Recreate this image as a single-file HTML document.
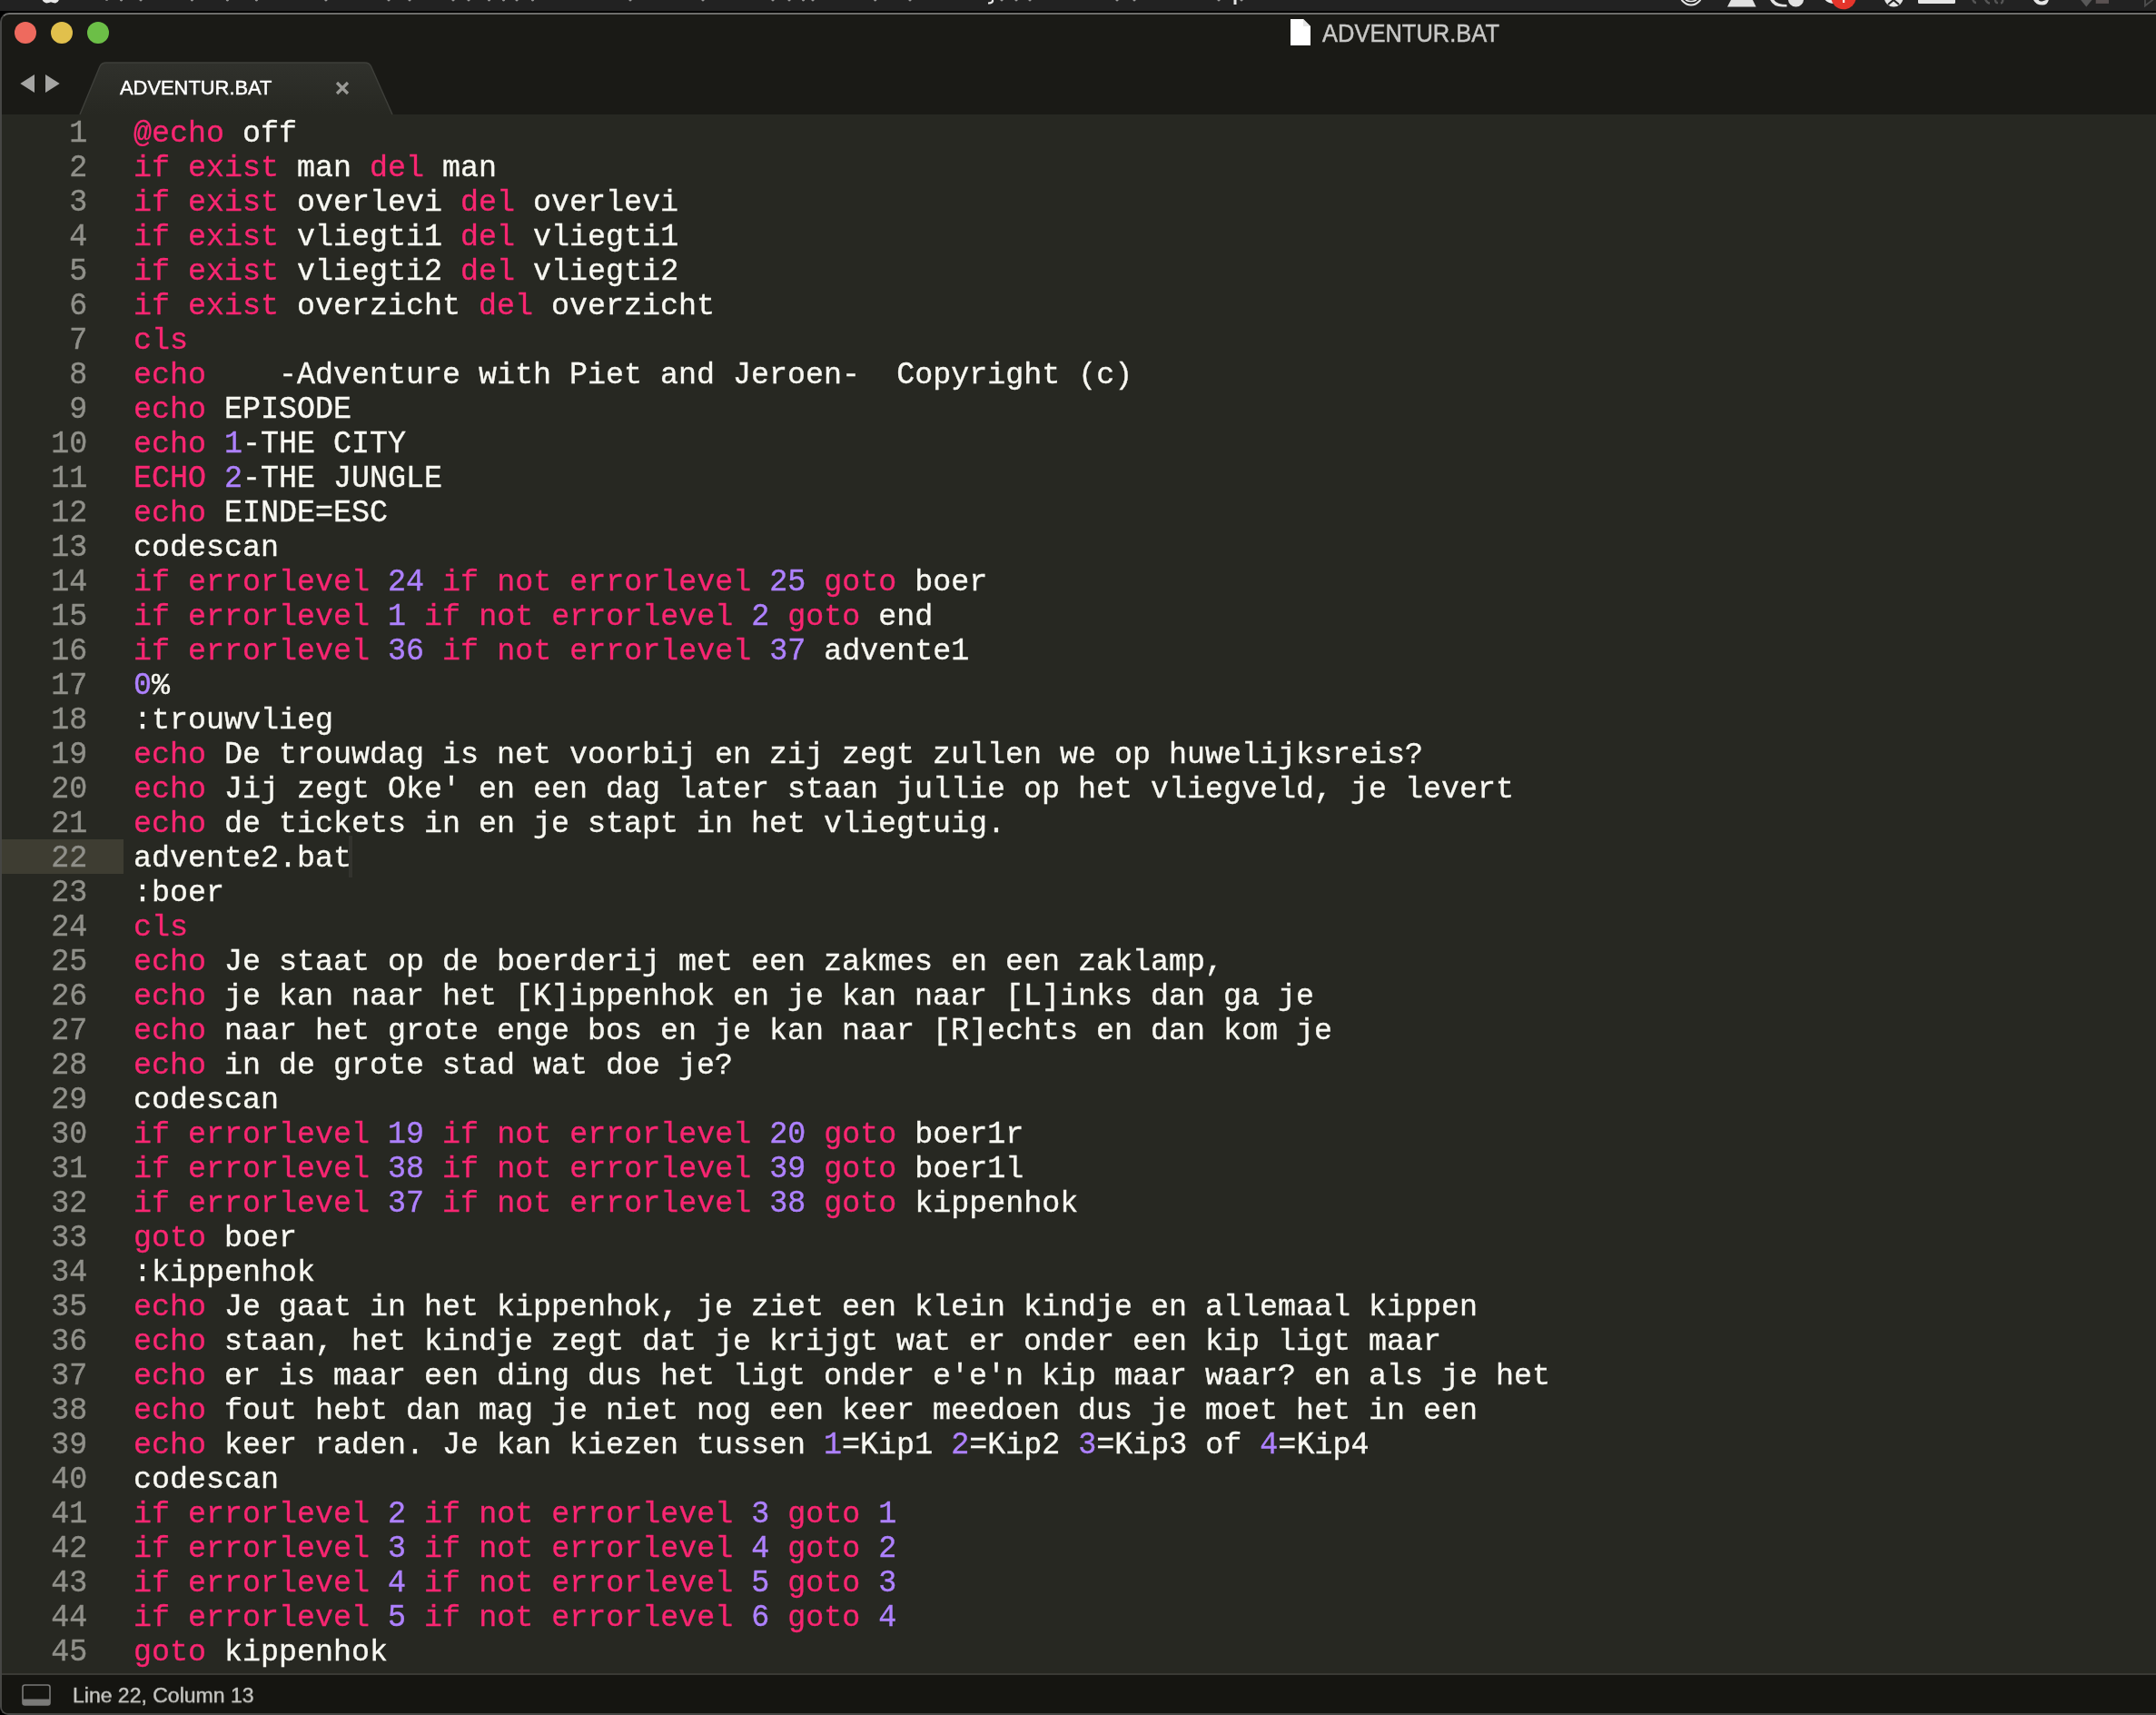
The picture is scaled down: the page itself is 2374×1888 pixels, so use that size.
<!DOCTYPE html>
<html><head><meta charset="utf-8">
<style>
*{margin:0;padding:0;box-sizing:border-box}
html,body{width:2374px;height:1888px;overflow:hidden;background:#000}
body{position:relative;font-family:"Liberation Sans",sans-serif}
#menubar{position:absolute;left:0;top:0;width:2374px;height:12px;background:#222222;overflow:hidden}
#win{position:absolute;left:0;top:14px;width:2400px;height:1874px;background:#1a1a16;border-radius:10px 0 0 9px;border:2px solid #464644;border-top-color:#6e6e6c;border-right:none;overflow:hidden}
#editor{position:absolute;left:0;top:110px;width:2400px;height:1716px;background:#272822}
#status{position:absolute;left:0;top:1826px;width:2400px;height:44px;background:#151511;border-top:2px solid #3a3a35}
.r{will-change:transform;position:absolute;left:0;height:38px;width:2374px;font-family:"Liberation Mono",monospace;font-size:33.33px;line-height:38px;white-space:pre;color:#f8f8f2}
.r .n{position:absolute;right:calc(2374px - 96.3px);top:2.2px;color:#90908a;text-align:right;transform:scaleY(1.08);transform-origin:0 28px}
.r .c{position:absolute;left:147px;top:1.6px;transform:scaleY(1.02);transform-origin:0 28px}
.r b{font-weight:normal;color:#f92672}
.r .c,.r .n{-webkit-text-stroke:0.35px currentColor}
.r i{font-style:normal;color:#ae81ff}
.r u{text-decoration:none;display:inline-block;transform:scaleY(1.04);transform-origin:0 27.9px}
.dot{position:absolute;width:24px;height:24px;border-radius:50%}
.ui{position:absolute;white-space:pre;line-height:1;will-change:transform;-webkit-text-stroke:0.45px currentColor}
</style></head><body>
<div id="menubar"><svg width="2374" height="12" style="position:absolute;left:0;top:0">
  <ellipse cx="117.5" cy="0" rx="1.5" ry="1.0" fill="#8a8a8a"/><ellipse cx="133.5" cy="0" rx="1.6" ry="1.4" fill="#9a9a9a"/><ellipse cx="155.0" cy="0" rx="1.6" ry="1.4" fill="#9a9a9a"/><ellipse cx="211.4" cy="0" rx="1.6" ry="1.4" fill="#9a9a9a"/><ellipse cx="250.4" cy="0" rx="1.6" ry="1.4" fill="#9a9a9a"/><ellipse cx="282.4" cy="0" rx="1.6" ry="1.4" fill="#9a9a9a"/><ellipse cx="358.9" cy="0" rx="1.6" ry="1.4" fill="#9a9a9a"/><ellipse cx="428.0" cy="0" rx="1.6" ry="1.4" fill="#9a9a9a"/><ellipse cx="451.0" cy="0" rx="1.6" ry="1.4" fill="#9a9a9a"/><ellipse cx="499.0" cy="0" rx="1.6" ry="1.4" fill="#9a9a9a"/><ellipse cx="516.0" cy="0" rx="1.6" ry="1.4" fill="#9a9a9a"/><ellipse cx="538.5" cy="0" rx="1.6" ry="1.4" fill="#9a9a9a"/><ellipse cx="554.5" cy="0" rx="1.6" ry="1.4" fill="#9a9a9a"/><ellipse cx="569.0" cy="0" rx="1.6" ry="1.4" fill="#9a9a9a"/><ellipse cx="586.5" cy="0" rx="1.6" ry="1.4" fill="#9a9a9a"/><ellipse cx="694.0" cy="0" rx="1.6" ry="1.4" fill="#9a9a9a"/><ellipse cx="774.0" cy="0" rx="1.6" ry="1.4" fill="#9a9a9a"/><ellipse cx="851.0" cy="0" rx="1.6" ry="1.4" fill="#9a9a9a"/><ellipse cx="869.0" cy="0" rx="1.6" ry="1.4" fill="#9a9a9a"/><ellipse cx="884.5" cy="0" rx="1.6" ry="1.4" fill="#9a9a9a"/><ellipse cx="895.0" cy="0" rx="1.6" ry="1.4" fill="#9a9a9a"/><ellipse cx="963.7" cy="0" rx="1.6" ry="1.4" fill="#9a9a9a"/><ellipse cx="1002.0" cy="0" rx="1.6" ry="1.4" fill="#9a9a9a"/><ellipse cx="1103.0" cy="0" rx="1.6" ry="1.4" fill="#9a9a9a"/><ellipse cx="1119.0" cy="0" rx="1.6" ry="1.4" fill="#9a9a9a"/><ellipse cx="1134.0" cy="0" rx="1.6" ry="1.4" fill="#9a9a9a"/><ellipse cx="1230.0" cy="0" rx="1.6" ry="1.4" fill="#9a9a9a"/><ellipse cx="1249.0" cy="0" rx="1.6" ry="1.4" fill="#9a9a9a"/><ellipse cx="1342.0" cy="0" rx="1.6" ry="1.4" fill="#9a9a9a"/><ellipse cx="1367.0" cy="0" rx="1.6" ry="1.4" fill="#9a9a9a"/><path d="M1093,-2 L1093,1.5 Q1092,3.5 1088,3.5" fill="none" stroke="#e6e6e6" stroke-width="2.2"/><rect x="1358.5" y="-1" width="3" height="6" fill="#e6e6e6"/>
  <path d="M46,-2 Q47,3 51,3.5 Q54,3 56,2.2 Q58,3 61,3.5 Q64.5,3 65.5,-2 Z" fill="#e8e8e8"/>
  <path d="M1850,-6 A12.5,12 0 0 0 1874.5,-6 A12.5,11.5 0 0 1 1850,-6 Z" fill="none"/>
  <path d="M1849.5,-8 A12.5,13.5 0 0 0 1874.5,-8" fill="none" stroke="#e6e6e6" stroke-width="2"/>
  <path d="M1856,0 Q1862,3 1868,0" fill="none" stroke="#e6e6e6" stroke-width="1.6"/>
  <polygon points="1907,-2 1929,-2 1933.6,7.6 1902,7.6" fill="#e2e2e2"/>
  <path d="M1948,-4 Q1950,7.5 1963,7.6 L1967.5,7.6 L1967.5,5 Q1953,5 1952,-4 Z" fill="#e2e2e2"/>
  <circle cx="1977.5" cy="-1" r="8.6" fill="#e2e2e2"/>
  <path d="M2008,-2 Q2012,4 2020,4 L2020,-2 Z" fill="#ececec"/>
  <circle cx="2030" cy="-3.5" r="13.8" fill="#e5352b"/>
  <rect x="2029" y="-2" width="2.2" height="5" fill="#fff"/>
  <circle cx="2085.2" cy="-3" r="10.5" fill="#e6e6e6"/>
  <path d="M2079,-5 L2091,5 M2091,-5 L2079,5" fill="none" stroke="#222" stroke-width="2.2"/>
  <rect x="2112" y="-4" width="41" height="7.9" rx="1.5" fill="#e6e6e6"/>
  <path d="M2172,-2 Q2173,3 2176,3 M2186,-1 Q2188,3.5 2191,3.5 M2197,-1 Q2197,3.5 2200,3 M2205,-2 Q2206,3 2203,3.5" fill="none" stroke="#555" stroke-width="2.5"/>
  <path d="M2238,-3 Q2240,5.5 2249,5.5 Q2255,5.5 2256,-1 L2250,1 Q2245,3 2243,-3 Z" fill="#e6e6e6"/>
  <polygon points="2289.6,-2 2305,-2 2297.3,7.6" fill="#585858"/>
  <rect x="2307.7" y="-2" width="14.3" height="5.9" fill="#5a5252"/>
  <path d="M2362,-2 L2362,6.3 L2374,-3" fill="none" stroke="#4e4e4e" stroke-width="1.8"/>
</svg></div>
<div id="win">
  <div class="dot" style="left:14px;top:8px;background:#ee6a5e"></div>
  <div class="dot" style="left:54px;top:8px;background:#e1c04c"></div>
  <div class="dot" style="left:94px;top:8px;background:#6cbf47"></div>
  <div id="editor"></div>
  <div id="status"></div>
</div>
<!-- nav arrows -->
<svg style="position:absolute;left:0;top:0" width="100" height="130">
  <polygon points="22.3,92 38,82 38,102" fill="#a5a5a3"/>
  <polygon points="50,82 65.7,92 50,102" fill="#a5a5a3"/>
</svg>
<!-- tab -->
<svg style="position:absolute;left:0;top:0" width="500" height="130">
  <defs><linearGradient id="tg" x1="0" y1="0" x2="0" y2="1"><stop offset="0" stop-color="#30312c"/><stop offset="1" stop-color="#272822"/></linearGradient></defs>
  <path d="M88,126 L110,73 Q112,69 117,69 L401.5,69 Q406.5,69 408.5,73 L432,126 Z" fill="url(#tg)"/>
  <path d="M88,126 L110,73 Q112,69 117,69 L401.5,69 Q406.5,69 408.5,73 L432,126" fill="none" stroke="#3e3f3a" stroke-width="1.5"/>
  <path d="M371,91 L383,103 M383,91 L371,103" stroke="#9a9a96" stroke-width="3.2" stroke-linecap="butt"/>
</svg>
<div class="ui" id="tabt" style="left:132px;top:85.6px;font-size:21.9px;color:#ffffff;transform:scaleY(1.03);transform-origin:0 100%">ADVENTUR.BAT</div>
<!-- title -->
<svg style="position:absolute;left:1418px;top:18px" width="30" height="34">
  <path d="M3,3 L17,3 L25,11 L25,32 L3,32 Z" fill="#ffffff"/>
  <path d="M17,3 L17,11 L25,11" fill="#e6e6e6"/>
</svg>
<div class="ui" id="titt" style="left:1456px;top:25.3px;font-size:25.5px;color:#c8c8c6;transform:scaleY(1.075);transform-origin:0 100%">ADVENTUR.BAT</div>
<!-- gutter highlight + cursor -->
<div style="position:absolute;left:2px;top:924px;width:134px;height:38px;background:#3e3d32"></div>
<div style="position:absolute;left:384px;top:920px;width:4px;height:46px;background:#33332e"></div>
<div class="r" style="top:126px"><span class="n">1</span><span class="c"><b>@echo</b> off</span></div>
<div class="r" style="top:164px"><span class="n">2</span><span class="c"><b>if</b> <b>exist</b> man <b>del</b> man</span></div>
<div class="r" style="top:202px"><span class="n">3</span><span class="c"><b>if</b> <b>exist</b> overlevi <b>del</b> overlevi</span></div>
<div class="r" style="top:240px"><span class="n">4</span><span class="c"><b>if</b> <b>exist</b> vliegti<u>1</u> <b>del</b> vliegti<u>1</u></span></div>
<div class="r" style="top:278px"><span class="n">5</span><span class="c"><b>if</b> <b>exist</b> vliegti<u>2</u> <b>del</b> vliegti<u>2</u></span></div>
<div class="r" style="top:316px"><span class="n">6</span><span class="c"><b>if</b> <b>exist</b> overzicht <b>del</b> overzicht</span></div>
<div class="r" style="top:354px"><span class="n">7</span><span class="c"><b>cls</b></span></div>
<div class="r" style="top:392px"><span class="n">8</span><span class="c"><b>echo</b>    -<u>A</u>dventure with <u>P</u>iet and <u>J</u>eroen-  <u>C</u>opyright (c)</span></div>
<div class="r" style="top:430px"><span class="n">9</span><span class="c"><b>echo</b> <u>EPISODE</u></span></div>
<div class="r" style="top:468px"><span class="n">10</span><span class="c"><b>echo</b> <i><u>1</u></i>-<u>THE</u> <u>CITY</u></span></div>
<div class="r" style="top:506px"><span class="n">11</span><span class="c"><b><u>ECHO</u></b> <i><u>2</u></i>-<u>THE</u> <u>JUNGLE</u></span></div>
<div class="r" style="top:544px"><span class="n">12</span><span class="c"><b>echo</b> <u>EINDE</u>=<u>ESC</u></span></div>
<div class="r" style="top:582px"><span class="n">13</span><span class="c">codescan</span></div>
<div class="r" style="top:620px"><span class="n">14</span><span class="c"><b>if</b> <b>errorlevel</b> <i><u>24</u></i> <b>if</b> <b>not</b> <b>errorlevel</b> <i><u>25</u></i> <b>goto</b> boer</span></div>
<div class="r" style="top:658px"><span class="n">15</span><span class="c"><b>if</b> <b>errorlevel</b> <i><u>1</u></i> <b>if</b> <b>not</b> <b>errorlevel</b> <i><u>2</u></i> <b>goto</b> end</span></div>
<div class="r" style="top:696px"><span class="n">16</span><span class="c"><b>if</b> <b>errorlevel</b> <i><u>36</u></i> <b>if</b> <b>not</b> <b>errorlevel</b> <i><u>37</u></i> advente<u>1</u></span></div>
<div class="r" style="top:734px"><span class="n">17</span><span class="c"><i><u>0</u></i>%</span></div>
<div class="r" style="top:772px"><span class="n">18</span><span class="c">:trouwvlieg</span></div>
<div class="r" style="top:810px"><span class="n">19</span><span class="c"><b>echo</b> <u>D</u>e trouwdag is net voorbij en zij zegt zullen we op huwelijksreis?</span></div>
<div class="r" style="top:848px"><span class="n">20</span><span class="c"><b>echo</b> <u>J</u>ij zegt <u>O</u>ke&#x27; en een dag later staan jullie op het vliegveld, je levert</span></div>
<div class="r" style="top:886px"><span class="n">21</span><span class="c"><b>echo</b> de tickets in en je stapt in het vliegtuig.</span></div>
<div class="r" style="top:924px"><span class="n">22</span><span class="c">advente<u>2</u>.bat</span></div>
<div class="r" style="top:962px"><span class="n">23</span><span class="c">:boer</span></div>
<div class="r" style="top:1000px"><span class="n">24</span><span class="c"><b>cls</b></span></div>
<div class="r" style="top:1038px"><span class="n">25</span><span class="c"><b>echo</b> <u>J</u>e staat op de boerderij met een zakmes en een zaklamp,</span></div>
<div class="r" style="top:1076px"><span class="n">26</span><span class="c"><b>echo</b> je kan naar het [<u>K</u>]ippenhok en je kan naar [<u>L</u>]inks dan ga je</span></div>
<div class="r" style="top:1114px"><span class="n">27</span><span class="c"><b>echo</b> naar het grote enge bos en je kan naar [<u>R</u>]echts en dan kom je</span></div>
<div class="r" style="top:1152px"><span class="n">28</span><span class="c"><b>echo</b> in de grote stad wat doe je?</span></div>
<div class="r" style="top:1190px"><span class="n">29</span><span class="c">codescan</span></div>
<div class="r" style="top:1228px"><span class="n">30</span><span class="c"><b>if</b> <b>errorlevel</b> <i><u>19</u></i> <b>if</b> <b>not</b> <b>errorlevel</b> <i><u>20</u></i> <b>goto</b> boer<u>1</u>r</span></div>
<div class="r" style="top:1266px"><span class="n">31</span><span class="c"><b>if</b> <b>errorlevel</b> <i><u>38</u></i> <b>if</b> <b>not</b> <b>errorlevel</b> <i><u>39</u></i> <b>goto</b> boer<u>1</u>l</span></div>
<div class="r" style="top:1304px"><span class="n">32</span><span class="c"><b>if</b> <b>errorlevel</b> <i><u>37</u></i> <b>if</b> <b>not</b> <b>errorlevel</b> <i><u>38</u></i> <b>goto</b> kippenhok</span></div>
<div class="r" style="top:1342px"><span class="n">33</span><span class="c"><b>goto</b> boer</span></div>
<div class="r" style="top:1380px"><span class="n">34</span><span class="c">:kippenhok</span></div>
<div class="r" style="top:1418px"><span class="n">35</span><span class="c"><b>echo</b> <u>J</u>e gaat in het kippenhok, je ziet een klein kindje en allemaal kippen</span></div>
<div class="r" style="top:1456px"><span class="n">36</span><span class="c"><b>echo</b> staan, het kindje zegt dat je krijgt wat er onder een kip ligt maar</span></div>
<div class="r" style="top:1494px"><span class="n">37</span><span class="c"><b>echo</b> er is maar een ding dus het ligt onder e&#x27;e&#x27;n kip maar waar? en als je het</span></div>
<div class="r" style="top:1532px"><span class="n">38</span><span class="c"><b>echo</b> fout hebt dan mag je niet nog een keer meedoen dus je moet het in een</span></div>
<div class="r" style="top:1570px"><span class="n">39</span><span class="c"><b>echo</b> keer raden. <u>J</u>e kan kiezen tussen <i><u>1</u></i>=<u>K</u>ip<u>1</u> <i><u>2</u></i>=<u>K</u>ip<u>2</u> <i><u>3</u></i>=<u>K</u>ip<u>3</u> of <i><u>4</u></i>=<u>K</u>ip<u>4</u></span></div>
<div class="r" style="top:1608px"><span class="n">40</span><span class="c">codescan</span></div>
<div class="r" style="top:1646px"><span class="n">41</span><span class="c"><b>if</b> <b>errorlevel</b> <i><u>2</u></i> <b>if</b> <b>not</b> <b>errorlevel</b> <i><u>3</u></i> <b>goto</b> <i><u>1</u></i></span></div>
<div class="r" style="top:1684px"><span class="n">42</span><span class="c"><b>if</b> <b>errorlevel</b> <i><u>3</u></i> <b>if</b> <b>not</b> <b>errorlevel</b> <i><u>4</u></i> <b>goto</b> <i><u>2</u></i></span></div>
<div class="r" style="top:1722px"><span class="n">43</span><span class="c"><b>if</b> <b>errorlevel</b> <i><u>4</u></i> <b>if</b> <b>not</b> <b>errorlevel</b> <i><u>5</u></i> <b>goto</b> <i><u>3</u></i></span></div>
<div class="r" style="top:1760px"><span class="n">44</span><span class="c"><b>if</b> <b>errorlevel</b> <i><u>5</u></i> <b>if</b> <b>not</b> <b>errorlevel</b> <i><u>6</u></i> <b>goto</b> <i><u>4</u></i></span></div>
<div class="r" style="top:1798px"><span class="n">45</span><span class="c"><b>goto</b> kippenhok</span></div>
<!-- status -->
<svg style="position:absolute;left:20px;top:1850px" width="40" height="32">
  <rect x="5" y="5" width="30" height="22" rx="2.5" fill="none" stroke="#7a7a78" stroke-width="1.6"/>
  <rect x="5" y="20.5" width="30" height="6.5" rx="1" fill="#7a7a78"/>
</svg>
<div class="ui" id="stt" style="left:80px;top:1855px;font-size:23.0px;color:#c4c4c0;transform:scaleY(0.95);transform-origin:0 100%">Line 22, Column 13</div>
</body></html>
